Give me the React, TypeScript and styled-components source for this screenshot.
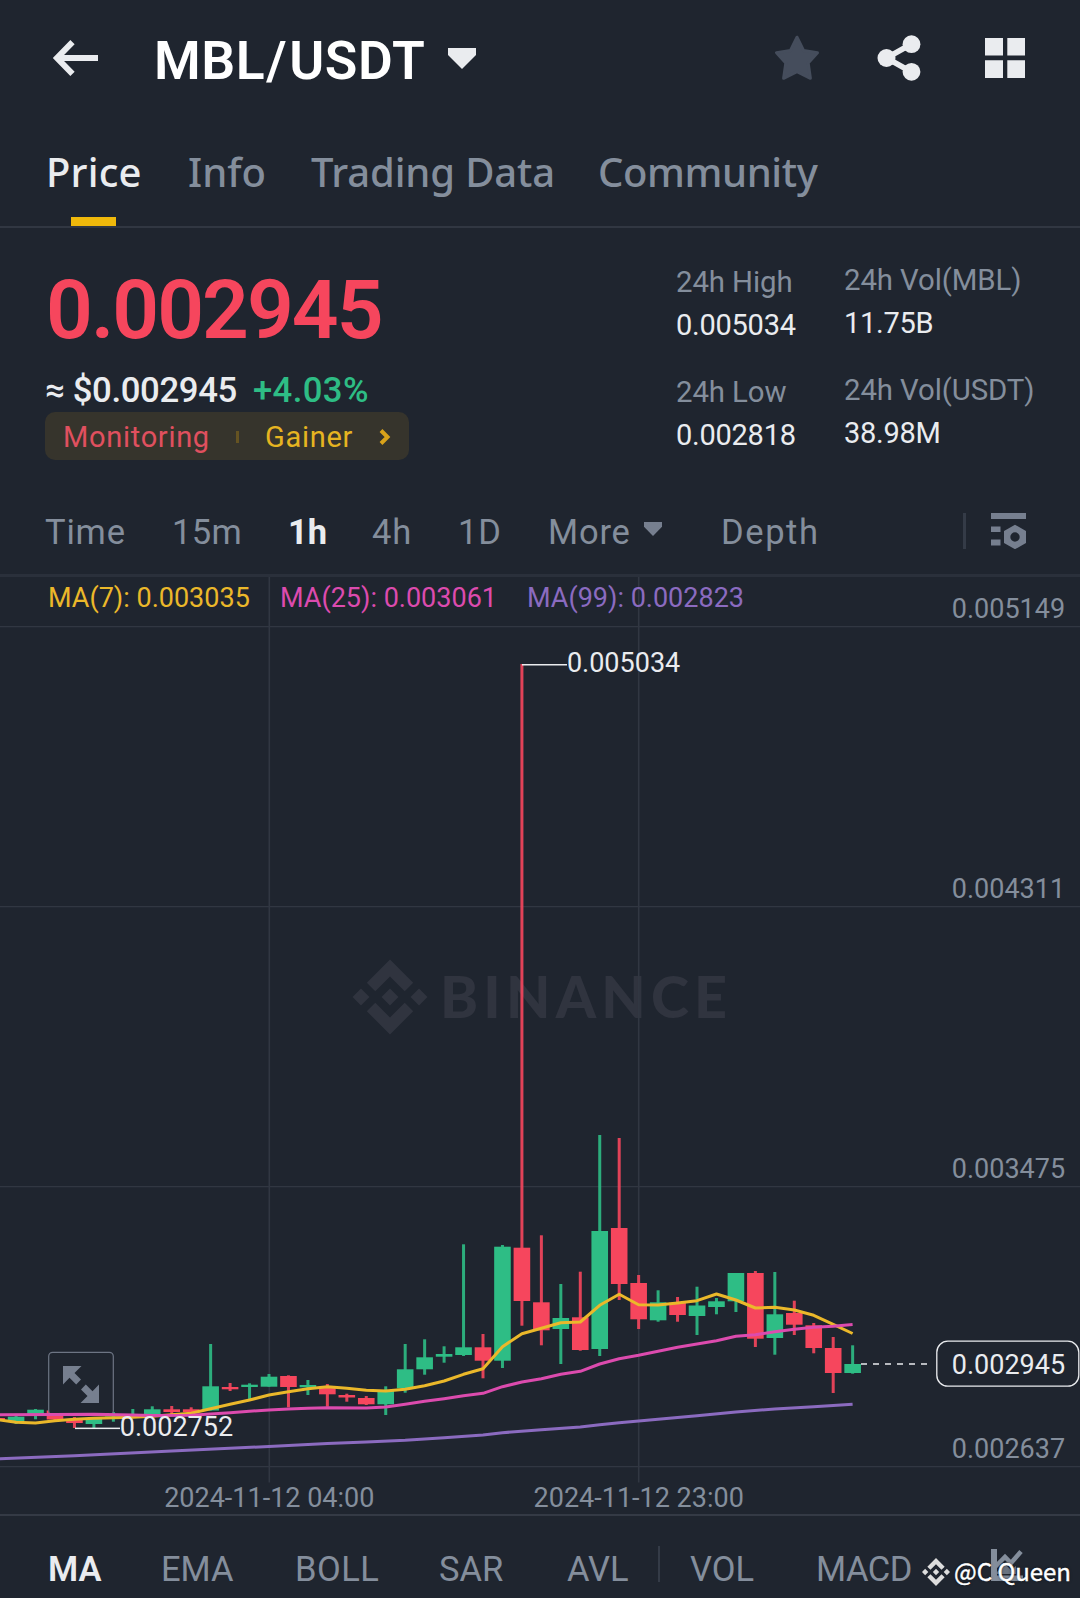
import React from "react";
import styled, { createGlobalStyle } from "styled-components";

const color = {
  bg: "#1f252f",
  line: "#313742",
  text: "#eaecef",
  muted: "#848e9c",
  icon: "#767f8f",
  up: "#2ebd85",
  down: "#f6465d",
  yellow: "#f0b90b",
  ma7: "#ebb82a",
  ma25: "#dc4bae",
  ma99: "#8b6bc0",
};

const GlobalStyle = createGlobalStyle`
  * { box-sizing: border-box; }
  body { margin: 0; background: ${color.bg}; overflow: hidden; }
  svg { display: block; }
`;

const Screen = styled.main`
  position: relative;
  width: 1080px;
  height: 1598px;
  overflow: hidden;
  display: flex;
  flex-direction: column;
  background: ${color.bg};
  color: ${color.text};
  font-family: Roboto, "Liberation Sans", sans-serif;
  white-space: nowrap;
`;

/* ---------- header ---------- */

const Header = styled.header`
  height: 116px;
  padding: 0 55px 0 52px;
  display: grid;
  grid-template-columns: 102px 294px 1fr auto auto auto;
  align-items: center;
`;

const Title = styled.h1`
  margin: 0;
  padding-top: 5px;
  font-size: 53.4px;
  line-height: 64px;
  font-weight: 600;
  letter-spacing: 0.6px;
  color: #fff;
`;

const Slash = styled.span`
  margin: 0 2px 0 1px;
`;

const HeaderIcon = styled.span<{ $gap?: number }>`
  margin-left: ${(p) => p.$gap ?? 0}px;
`;

const Tabs = styled.nav`
  height: 112px;
  padding-left: 46px;
  display: grid;
  grid-template-columns: 142px 123px 287px 1fr;
  border-bottom: 2px solid ${color.line};
`;

const Tab = styled.a<{ $active?: boolean; $ls?: number }>`
  position: relative;
  font-family: "Noto Sans", Roboto, sans-serif;
  font-size: 40px;
  line-height: 111px;
  font-weight: 500;
  letter-spacing: ${(p) => p.$ls ?? 0}px;
  color: ${(p) => (p.$active ? color.text : color.muted)};
`;

const TabMarker = styled.i`
  position: absolute;
  left: 25px;
  bottom: 1px;
  width: 45px;
  height: 9px;
  background: ${color.yellow};
`;

/* ---------- summary ---------- */

const Summary = styled.section`
  height: 260px;
  padding: 28px 0 0 45px;
  display: grid;
  grid-template-columns: 631px 1fr;
`;

const Price = styled.div`
  padding-left: 1px;
  font-size: 82px;
  line-height: 108px;
  font-weight: 600;
  letter-spacing: -1.95px;
  color: ${color.down};
`;

const SubPrice = styled.div`
  margin-top: 4px;
  display: flex;
  gap: 16px;
  font-size: 34.7px;
  line-height: 44px;
  font-weight: 500;
  letter-spacing: -0.35px;
`;

const Change = styled.span`
  color: ${color.up};
  letter-spacing: 0.4px;
`;

const Tags = styled.div`
  width: 364px;
  height: 48px;
  padding: 1px 18px 0 18px;
  display: grid;
  grid-template-columns: 173px 29px 1fr auto;
  align-items: center;
  border-radius: 10px;
  background: #36342c;
  font-size: 29px;
`;

const TagText = styled.span<{ $tone: string }>`
  color: ${(p) => p.$tone};
  letter-spacing: 0.7px;
`;

const TagRule = styled.i`
  width: 3px;
  height: 12px;
  background: #655322;
`;

const Stats = styled.div`
  padding-top: 5px;
  display: grid;
  grid-template-columns: 168px 1fr;
`;

const StatColumn = styled.dl<{ $lift?: number }>`
  margin: ${(p) => -(p.$lift ?? 0)}px 0 0;
`;

const StatLabel = styled.dt`
  font-size: 29.4px;
  line-height: 43px;
  color: ${color.muted};
  letter-spacing: -0.1px;

  dd + & {
    margin-top: 24px;
  }
`;

const StatValue = styled.dd`
  margin: 0;
  font-size: 29px;
  line-height: 43px;
  letter-spacing: -0.25px;
`;

/* ---------- interval row ---------- */

const Intervals = styled.nav`
  height: 89px;
  padding-left: 45px;
  display: grid;
  grid-template-columns: 127px 116px 84px 86px 90px 173px 242px 28px 1fr;
  border-bottom: 3px solid #2a303b;
`;

const Interval = styled.a<{ $active?: boolean; $ls?: number }>`
  display: flex;
  align-items: center;
  gap: 13px;
  font-size: 34.5px;
  line-height: 88px;
  height: 88px;
  font-weight: ${(p) => (p.$active ? 700 : 400)};
  letter-spacing: ${(p) => p.$ls ?? 0.8}px;
  color: ${(p) => (p.$active ? color.text : color.muted)};
`;

const CaretBox = styled.span`
  padding-bottom: 6px;
`;

const RowRule = styled.i<{ $w?: number; $lift?: number }>`
  align-self: center;
  width: ${(p) => p.$w ?? 3}px;
  height: 36px;
  margin-top: ${(p) => -(p.$lift ?? 0)}px;
  background: #343b47;
`;

const SettingsBox = styled.span`
  align-self: center;
  margin-top: -2px;
`;

/* ---------- chart and bottom row ---------- */

const Chart = styled.svg`
  flex: none;
  width: 1080px;
  height: 937px;
  font-family: Roboto, "Liberation Sans", sans-serif;
  font-size: 27px;
`;

const Indicators = styled.nav`
  height: 84px;
  padding: 37px 0 0 48px;
  display: grid;
  grid-template-columns: 113px 134px 144px 128px 91px 32px 126px 175px 1fr;
  border-top: 2px solid #343a45;
`;

const Indicator = styled.a<{ $active?: boolean; $ls?: number }>`
  font-size: 34.5px;
  line-height: 32px;
  font-weight: ${(p) => (p.$active ? 600 : 400)};
  letter-spacing: ${(p) => p.$ls ?? 0}px;
  color: ${(p) => (p.$active ? color.text : color.muted)};
`;

const IndicatorIcon = styled.span`
  margin-top: -4px;
`;

const Credit = styled.div`
  position: absolute;
  left: 922px;
  top: 1557px;
  display: flex;
  align-items: center;
  gap: 4px;
  font-family: "Noto Sans CJK SC", "Noto Sans", sans-serif;
  font-size: 24px;
  line-height: 32px;
  font-weight: 400;
  color: #fff;
  text-shadow: 0 0 3px rgba(0, 0, 0, 0.6);
`;

const CreditName = styled.span`
  margin-top: -2px;
  -webkit-text-stroke: 0.4px #fff;
`;

/* ---------- candle data: slot, direction, body top and bottom, wick top and bottom ---------- */

type Candle = [slot: number, up: 0 | 1, top: number, bottom: number, high: number, low: number];

const candles: Candle[] = [
  [-14, 0, 1418, 1420, 1417, 1421],
  [-13, 1, 1416.7, 1421, 1415.7, 1424],
  [-12, 1, 1409.7, 1416, 1409, 1419.3],
  [-11, 0, 1410.5, 1419.5, 1410, 1420],
  [-10, 0, 1419.3, 1423, 1417, 1428],
  [-9, 1, 1418.7, 1424, 1418, 1428],
  [-8, 1, 1416.5, 1418.3, 1412, 1421.7],
  [-7, 1, 1415.5, 1417, 1409, 1417],
  [-6, 1, 1409.3, 1414, 1406.3, 1415],
  [-5, 0, 1409.3, 1412, 1406, 1414.5],
  [-4, 0, 1409.3, 1412, 1407.3, 1414],
  [-3, 1, 1386.3, 1410.5, 1344, 1410.5],
  [-2, 0, 1387, 1389.3, 1383, 1391],
  [-1, 1, 1384.7, 1387, 1383.3, 1400],
  [0, 1, 1376.7, 1386.7, 1374, 1386.7],
  [1, 0, 1376, 1387, 1375.3, 1407.3],
  [2, 1, 1385, 1387.3, 1380, 1395],
  [3, 0, 1387.7, 1394.3, 1384, 1406.7],
  [4, 0, 1395, 1397.5, 1393.7, 1401.7],
  [5, 0, 1398, 1404.3, 1396, 1405],
  [6, 1, 1391, 1404.3, 1386.3, 1415],
  [7, 1, 1369.3, 1388.3, 1344, 1392.7],
  [8, 1, 1357.3, 1369.3, 1339.3, 1374.7],
  [9, 1, 1354, 1356.7, 1346.3, 1362.7],
  [10, 1, 1347.3, 1355, 1244.3, 1356],
  [11, 0, 1347.3, 1360.7, 1334, 1378.3],
  [12, 1, 1246.7, 1360.7, 1245, 1368],
  [13, 0, 1247.7, 1301, 664, 1325.7],
  [14, 0, 1302.3, 1330.3, 1235.3, 1345.3],
  [15, 1, 1318, 1329, 1284, 1364],
  [16, 0, 1317.3, 1350, 1271.7, 1350.7],
  [17, 1, 1231, 1349, 1135, 1356],
  [18, 0, 1228, 1284, 1138, 1300],
  [19, 0, 1283, 1319.3, 1275, 1329],
  [20, 1, 1302.3, 1320.3, 1290.3, 1321.7],
  [21, 0, 1302.7, 1315, 1297, 1321.7],
  [22, 1, 1305.5, 1316, 1286.7, 1335],
  [23, 1, 1301.3, 1307, 1298, 1314.3],
  [24, 1, 1273, 1301.3, 1273, 1312],
  [25, 0, 1273, 1338.7, 1271, 1347],
  [26, 1, 1314.3, 1338, 1272, 1354.7],
  [27, 0, 1313, 1324.7, 1300.7, 1335],
  [28, 0, 1325.3, 1348, 1323, 1353.3],
  [29, 0, 1348, 1373, 1337, 1393],
  [30, 1, 1364, 1373, 1345.3, 1373.7],
];

const ma7 = [
  [-14, 1419.5], [-13, 1422.3], [-12, 1423], [-11, 1420.7], [-10, 1419.3], [-9, 1418.3], [-8, 1417.8],
  [-7, 1417.3], [-6, 1416.3], [-5, 1414.7], [-4, 1413.3], [-3, 1408.7], [-2, 1404.3], [-1, 1400],
  [0, 1395], [1, 1391.7], [2, 1388.7], [3, 1386.7], [4, 1388.2], [5, 1390.3], [6, 1391], [7, 1389.3],
  [8, 1385.7], [9, 1381], [10, 1374.3], [11, 1368.7], [12, 1346.7], [13, 1333.7], [14, 1328.3],
  [15, 1322.7], [16, 1322], [17, 1305.3], [18, 1294.3], [19, 1304.7], [20, 1305], [21, 1303],
  [22, 1300.7], [23, 1294], [24, 1300], [25, 1308], [26, 1307.3], [27, 1310], [28, 1315.3],
  [29, 1324.3], [30, 1333.5],
];

const ma25 = [
  [-14, 1414.7], [-11, 1414.5], [-9, 1414.3], [-7, 1415], [-6, 1415.6], [-4, 1415.3], [-3, 1414],
  [-2, 1412.7], [-1, 1411.3], [0, 1410], [1, 1409], [2, 1408.3], [3, 1407.8], [5, 1408], [6, 1407],
  [7, 1404.3], [8, 1401.3], [9, 1398.7], [10, 1395.7], [11, 1393.3], [12, 1386.7], [13, 1382],
  [14, 1378.7], [15, 1374.3], [16, 1371.3], [17, 1364], [18, 1358.7], [19, 1355.3], [20, 1351.3],
  [21, 1347.3], [22, 1344], [23, 1340.7], [24, 1336.3], [25, 1334.7], [26, 1331.7], [27, 1329.3],
  [28, 1327.3], [29, 1326.3], [30, 1324.5],
];

const ma99 = [
  [-14, 1459], [-10, 1455.7], [-5, 1451], [0, 1446.5], [3, 1443.5], [5, 1442], [7, 1440.3],
  [9, 1437.7], [11, 1435], [12, 1432.7], [14, 1429.7], [16, 1427], [17, 1424.7], [18, 1422.7],
  [20, 1419.3], [22, 1415.8], [24, 1412], [26, 1409], [28, 1406.7], [30, 1404.3],
];

const slotX = (slot: number) => 269 + slot * 19.455;
const toPoints = (series: number[][]) => series.map(([s, y]) => `${slotX(s).toFixed(1)},${y}`).join(" ");

const axis = [
  { y: 626, label: "0.005149" },
  { y: 906, label: "0.004311" },
  { y: 1186, label: "0.003475" },
  { y: 1466, label: "0.002637" },
];

const dates = [
  { x: 269.3, label: "2024-11-12 04:00" },
  { x: 638.7, label: "2024-11-12 23:00" },
];

/* ---------- icons ---------- */

const BinanceMark = () => (
  <path d="M0-16 L9.9-6.1 L6.3-2.5 L0-8.8 L-6.3-2.5 L-9.9-6.1 Z M0 16 L9.9 6.1 L6.3 2.5 L0 8.8 L-6.3 2.5 L-9.9 6.1 Z M-16 0 L-12.4-3.6 L-8.8 0 L-12.4 3.6 Z M16 0 L12.4-3.6 L8.8 0 L12.4 3.6 Z M0-3.6 L3.6 0 L0 3.6 L-3.6 0 Z" />
);

const BackIcon = () => (
  <svg width="47" height="38" viewBox="0 0 47 38" fill="none" stroke={color.text} strokeWidth="6">
    <path d="M46 19H5M20.5 3.2 5 19l15.500 15.800" />
  </svg>
);

const Caret = ({ w, h, fill }: { w: number; h: number; fill: string }) => (
  <svg width={w} height={h} viewBox="0 0 28 21" preserveAspectRatio="none" fill={fill}>
    <path d="M0 0h28v7L14 21 0 7z" />
  </svg>
);

const StarIcon = () => (
  <svg width="46" height="46" viewBox="0 0 46 46" fill="#454d5c" stroke="#454d5c" strokeWidth="3" strokeLinejoin="round">
    <path d="M23 2.200 29.500 15.500 43.500 17.700 34.200 28 36.400 43.300 23 36.700 9.600 43.300 11.800 28 2.500 17.700 16.500 15.500z" />
  </svg>
);

const ShareIcon = () => (
  <svg width="44" height="46" viewBox="0 0 44 46" fill={color.text}>
    <path d="M34.500 9 9.500 23l25 14" fill="none" stroke={color.text} strokeWidth="5.500" />
    <circle cx="9.500" cy="23" r="9" />
    <circle cx="34.500" cy="9.200" r="8.900" />
    <circle cx="34.500" cy="36.800" r="8.900" />
  </svg>
);

const GridIcon = () => (
  <svg width="40" height="40" viewBox="0 0 40 40" fill={color.text}>
    <path d="M0 0h18v17.500H0zM22.300 0H40v17.500H22.300zM0 22.300h18V40H0zM22.300 22.300H40V40H22.300z" />
  </svg>
);

const SettingsIcon = () => (
  <svg width="35" height="36" viewBox="0 0 35 36" fill={color.icon}>
    <path d="M0 0h35v6H0zM0 13.500h9.500v5.500H0zM0 26.500h9.500v6H0z" />
    <path
      fillRule="evenodd"
      d="M24 11.800 35 18v12L24 36.200 13 30V18zM24 19.300a4.700 4.700 0 1 0 0 9.400 4.700 4.700 0 0 0 0-9.400z"
    />
  </svg>
);

const ChartIcon = () => (
  <svg width="32" height="33" viewBox="0 0 32 33" fill={color.muted}>
    <path d="M0 0h6v26.500h26V32H0z" />
    <path d="M4 18 14 8l6 6L30 2.500" fill="none" stroke={color.muted} strokeWidth="4.500" />
    <path d="m6 23 8-8 6 6 5-4v8H6z" opacity="0.75" />
  </svg>
);

const PriceChart = () => (
  <Chart viewBox="0 577 1080 937">
    <g fill="#30343f" transform="translate(390 997) scale(2.340)">
      <BinanceMark />
    </g>
    <text x="440" y="1017.700" fill="#30343f" fontFamily="Lato" fontWeight="900" fontSize="57.500" textLength="287">
      BINANCE
    </text>

    <g fill={color.line}>
      {axis.map((a) => (
        <rect key={a.label} x="0" y={a.y} width="1080" height="1.300" />
      ))}
      {dates.map((d) => (
        <rect key={d.label} x={d.x - 0.8} y="577" width="1.600" height="905.500" />
      ))}
    </g>

    {candles.map(([slot, up, top, bottom, high, low]) => (
      <g key={slot} fill={up ? color.up : color.down}>
        <rect x={slotX(slot) - 1.500} y={high} width="3" height={low - high} opacity="0.9" />
        <rect x={slotX(slot) - 8.300} y={top} width="16.600" height={bottom - top} />
      </g>
    ))}

    <rect x="48.700" y="1352.300" width="64.600" height="62.500" rx="4" fill={color.bg} stroke="#6d7584" strokeWidth="1.200" />
    <g fill={color.icon}>
      <path d="M63 1366h18.500l-7 7 6.500 6.500-4.800 5-6.700-6.700-6.500 6.700z" />
      <path d="M99 1403H80.500l7-7-6.500-6.500 4.800-5 6.700 6.700 6.500-6.700z" />
    </g>

    <g fill="none" strokeWidth="3" strokeLinejoin="round">
      <polyline points={toPoints(ma99)} stroke={color.ma99} />
      <polyline points={toPoints(ma7)} stroke={color.ma7} />
      <polyline points={toPoints(ma25)} stroke={color.ma25} />
    </g>

    <g fill={color.text}>
      <rect x="522" y="664" width="45" height="1.500" />
      <text x="566.900" y="671.700">0.005034</text>
      <rect x="75" y="1427.600" width="45" height="1.500" />
      <text x="119.800" y="1435.700">0.002752</text>
    </g>

    <text x="48" y="606.700" fill={color.ma7}>MA(7): 0.003035</text>
    <text x="280" y="606.700" fill={color.ma25}>MA(25): 0.003061</text>
    <text x="527" y="606.700" fill={color.ma99}>MA(99): 0.002823</text>

    <g fill={color.muted}>
      {axis.map((a) => (
        <text key={a.label} x="951.800" y={a.y - 8}>{a.label}</text>
      ))}
      {dates.map((d) => (
        <text key={d.label} x={d.x} y="1506.700" textAnchor="middle">{d.label}</text>
      ))}
    </g>

    <path d="M861 1364h68" stroke={color.text} strokeWidth="1.500" strokeDasharray="6 6" />
    <rect x="936.800" y="1341.200" width="142" height="45" rx="11" fill={color.bg} stroke={color.text} strokeWidth="1.300" />
    <text x="951.800" y="1373.700" fill={color.text}>0.002945</text>
  </Chart>
);

export default function App() {
  return (
    <Screen>
      <GlobalStyle />
      <Header>
        <BackIcon />
        <Title>MBL<Slash>/</Slash>USDT</Title>
        <Caret w={28} h={21} fill={color.text} />
        <HeaderIcon><StarIcon /></HeaderIcon>
        <HeaderIcon $gap={57}><ShareIcon /></HeaderIcon>
        <HeaderIcon $gap={64}><GridIcon /></HeaderIcon>
      </Header>
      <Tabs>
        <Tab $active $ls={0.2}>Price<TabMarker /></Tab>
        <Tab>Info</Tab>
        <Tab $ls={-0.15}>Trading Data</Tab>
        <Tab $ls={-0.4}>Community</Tab>
      </Tabs>

      <Summary>
        <div>
          <Price>0.002945</Price>
          <SubPrice>
            <span>≈ $0.002945</span>
            <Change>+4.03%</Change>
          </SubPrice>
          <Tags>
            <TagText $tone="#e0505f">Monitoring</TagText>
            <TagRule />
            <TagText $tone="#e6b421">Gainer</TagText>
            <svg width="12" height="16" viewBox="0 0 12 16" fill="none" stroke="#d9a21a" strokeWidth="4">
              <path d="m2 1.500 6.500 6.500L2 14.500" />
            </svg>
          </Tags>
        </div>
        <Stats>
          <StatColumn>
            <StatLabel>24h High</StatLabel>
            <StatValue>0.005034</StatValue>
            <StatLabel>24h Low</StatLabel>
            <StatValue>0.002818</StatValue>
          </StatColumn>
          <StatColumn $lift={2}>
            <StatLabel>24h Vol(MBL)</StatLabel>
            <StatValue>11.75B</StatValue>
            <StatLabel>24h Vol(USDT)</StatLabel>
            <StatValue>38.98M</StatValue>
          </StatColumn>
        </Stats>
      </Summary>

      <Intervals>
        <Interval>Time</Interval>
        <Interval $ls={0.3}>15m</Interval>
        <Interval $active $ls={0}>1h</Interval>
        <Interval>4h</Interval>
        <Interval>1D</Interval>
        <Interval>
          More
          <CaretBox><Caret w={18} h={14} fill={color.icon} /></CaretBox>
        </Interval>
        <Interval $ls={1.6}>Depth</Interval>
        <RowRule $lift={3} />
        <SettingsBox><SettingsIcon /></SettingsBox>
      </Intervals>

      <PriceChart />

      <Indicators>
        <Indicator $active>MA</Indicator>
        <Indicator>EMA</Indicator>
        <Indicator $ls={0.5}>BOLL</Indicator>
        <Indicator>SAR</Indicator>
        <Indicator>AVL</Indicator>
        <RowRule $w={2} $lift={24} />
        <Indicator>VOL</Indicator>
        <Indicator $ls={-0.5}>MACD</Indicator>
        <IndicatorIcon><ChartIcon /></IndicatorIcon>
      </Indicators>

      <Credit>
        <svg width="28" height="28" viewBox="-16 -16 32 32" fill="#dddddd"><BinanceMark /></svg>
        <CreditName>@C Queen</CreditName>
      </Credit>
    </Screen>
  );
}
